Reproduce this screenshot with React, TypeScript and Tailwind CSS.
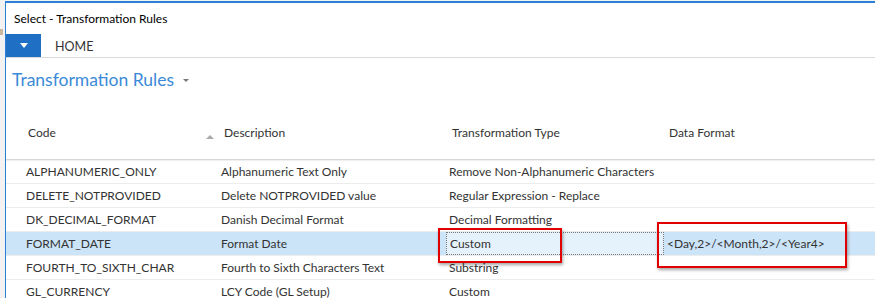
import React from "react";

const rows = [
  { code: "ALPHANUMERIC_ONLY", desc: "Alphanumeric Text Only", type: "Remove Non-Alphanumeric Characters", fmt: "" },
  { code: "DELETE_NOTPROVIDED", desc: "Delete NOTPROVIDED value", type: "Regular Expression - Replace", fmt: "" },
  { code: "DK_DECIMAL_FORMAT", desc: "Danish Decimal Format", type: "Decimal Formatting", fmt: "" },
  { code: "FORMAT_DATE", desc: "Format Date", type: "Custom", fmt: "<Day,2>/<Month,2>/<Year4>", selected: true },
  { code: "FOURTH_TO_SIXTH_CHAR", desc: "Fourth to Sixth Characters Text", type: "Substring", fmt: "" },
  { code: "GL_CURRENCY", desc: "LCY Code (GL Setup)", type: "Custom", fmt: "" },
];

const cols = "grid grid-cols-[195px_228px_218px_1fr] pl-[17px] shrink-0";

export default function App() {
  return (
    <div
      className="w-[875px] h-[298px] overflow-hidden bg-[#f2f2f2] flex text-[12px] leading-[16px] text-[#333] whitespace-nowrap"
      style={{ fontFamily: 'Lato, "Noto Sans", sans-serif' }}
    >
      {/* desktop strip behind the window */}
      <div className="w-[5px] shrink-0 flex flex-col">
        <div className="h-[29px]" />
        <div className="h-[6px] w-[3px] bg-[#c8b8a0]" />
      </div>

      <div className="relative flex-1 mt-[1px] bg-white border-l border-t-2 border-[#2b7fd4] flex flex-col">
        {/* title */}
        <div className="h-[31px] shrink-0 flex items-center pl-[8px] text-[12px] text-black">
          Select - Transformation Rules
        </div>

        {/* ribbon */}
        <div className="h-[24px] shrink-0 flex items-stretch border-b border-[#dadada]">
          <div className="w-[35px] bg-[#1f6fc5] flex items-center justify-center">
            <svg width="8" height="5" viewBox="0 0 8 5">
              <path d="M0 0 L8 0 L4 5 Z" fill="white" />
            </svg>
          </div>
          <div className="pl-[14px] pt-[3px] flex items-center text-[12.5px] text-[#333]">HOME</div>
        </div>

        {/* page title */}
        <div className="h-[44px] shrink-0 flex items-center pl-[6px] gap-[9px]">
          <span className="text-[17.5px] leading-[24px] text-[#3b8ad8]">Transformation Rules</span>
          <svg width="6" height="4" viewBox="0 0 6 4" className="mt-[2px]">
            <path d="M0 0 L6 0 L3 3 Z" fill="#777" />
          </svg>
        </div>

        {/* header row */}
        <div className={`${cols} h-[58px] items-end pb-[18px] border-b border-[#d6d6d6] shadow-[0_1px_1px_rgba(0,0,0,0.06)]`}>
          <div className="pl-[5px] relative">
            Code
            <svg width="8" height="4" viewBox="0 0 8 4" className="absolute left-[183px] top-[10px]">
              <path d="M0 4 L8 4 L4 0 Z" fill="#aaa" />
            </svg>
          </div>
          <div className="pl-[6px]">Description</div>
          <div className="pl-[6px]">Transformation Type</div>
          <div className="pl-[5px]">Data Format</div>
        </div>

        {/* rows */}
        {rows.map((r) => (
          <div
            key={r.code}
            className={`${cols} h-[24px] items-stretch border-b border-[#ececec] ${r.selected ? "bg-[#cce4f7]" : ""}`}
          >
            <div className="pl-[3px] flex items-center">{r.code}</div>
            <div className="pl-[3px] flex items-center">{r.desc}</div>
            <div
              className={`pl-[3px] flex items-center ${r.selected ? "bg-[#e5f1fb] border border-dotted border-[#777] pl-[2px]" : ""}`}
            >
              {r.type}
            </div>
            <div className="pl-[3px] flex items-center">{r.fmt}</div>
          </div>
        ))}

        {/* annotation boxes */}
        <div className="absolute left-[432px] top-[225px] w-[124px] h-[35px] border-2 border-[#e00000] shadow-[1px_2px_3px_rgba(0,0,0,0.35)]" />
        <div className="absolute left-[651px] top-[219px] w-[190px] h-[46px] border-2 border-[#e00000] shadow-[1px_2px_3px_rgba(0,0,0,0.35)]" />
      </div>
    </div>
  );
}
